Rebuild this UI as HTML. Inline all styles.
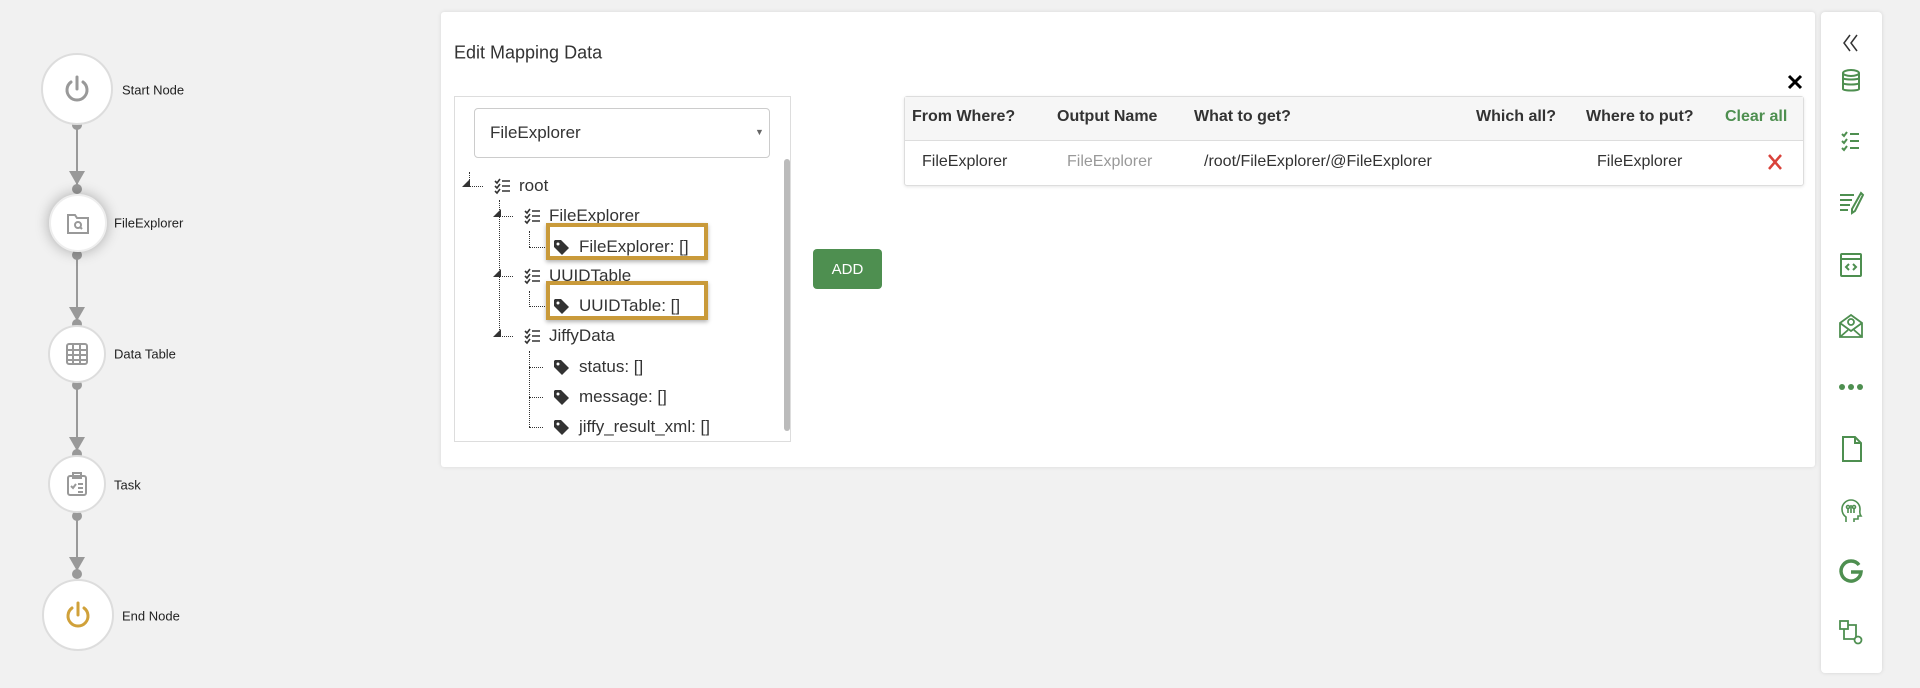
<!DOCTYPE html>
<html><head><meta charset="utf-8"><style>
*{box-sizing:border-box;margin:0;padding:0}
body{width:1920px;height:688px;overflow:hidden;background:#f1f1f1;font-family:"Liberation Sans",sans-serif;color:#222;position:relative}
.abs{position:absolute}
.node{position:absolute;border-radius:50%;background:#fff;border:2px solid #ddd;display:flex;align-items:center;justify-content:center}
.lbl{position:absolute;font-size:13px;color:#222;transform:translateY(-50%)}
.vline{position:absolute;width:2px;background:#999;left:76px}
.dot{position:absolute;width:10px;height:10px;border-radius:50%;background:#999;left:72px}
.arr{position:absolute;left:69px;width:0;height:0;border-left:8px solid transparent;border-right:8px solid transparent;border-top:14px solid #999}
.modal{left:441px;top:12px;width:1374px;height:455px;background:#fff;border-radius:3px;box-shadow:0 0 4px rgba(0,0,0,.1)}
.t{position:absolute;font-size:17px;color:#333;transform:translateY(-50%);white-space:nowrap}
.th{position:absolute;font-size:16px;font-weight:bold;color:#333;transform:translateY(-50%);white-space:nowrap}
.td{position:absolute;font-size:16px;color:#333;transform:translateY(-50%);white-space:nowrap}
.side{left:1821px;top:12px;width:61px;height:661px;background:#fff;border-radius:4px;box-shadow:0 0 4px rgba(0,0,0,.12)}
.ic{position:absolute;left:1837px}
</style></head><body>

<!-- flow -->
<div class="vline" style="top:118px;height:72px"></div>
<div class="dot" style="top:120px"></div><div class="arr" style="top:171px"></div><div class="dot" style="top:184px"></div>
<div class="vline" style="top:253px;height:72px"></div>
<div class="dot" style="top:250px"></div><div class="arr" style="top:307px"></div><div class="dot" style="top:319px"></div>
<div class="vline" style="top:382px;height:72px"></div>
<div class="dot" style="top:380px"></div><div class="arr" style="top:437px"></div><div class="dot" style="top:449px"></div>
<div class="vline" style="top:514px;height:64px"></div>
<div class="dot" style="top:511px"></div><div class="arr" style="top:557px"></div><div class="dot" style="top:569px"></div>

<div class="node" style="left:41px;top:53px;width:72px;height:72px">
<svg width="32" height="32" viewBox="0 0 32 32" fill="none" stroke="#999" stroke-width="3" stroke-linecap="round"><path d="M10 9a10 10 0 1 0 12 0"/><path d="M16 4v12"/></svg></div>
<div class="lbl" style="left:122px;top:90px">Start Node</div>
<div class="node" style="left:49px;top:194px;width:58px;height:58px;border-color:#eee;box-shadow:0 0 14px rgba(0,0,0,.3)">
<svg width="28" height="28" viewBox="0 0 28 28" fill="none" stroke="#999" stroke-width="2"><path d="M4 6h7l2 3h11v15H4z"/><circle cx="14" cy="16" r="3"/><path d="M16 18l2 2"/></svg></div>
<div class="lbl" style="left:114px;top:223px">FileExplorer</div>
<div class="node" style="left:48px;top:325px;width:58px;height:58px">
<svg width="26" height="26" viewBox="0 0 26 26" fill="none" stroke="#999" stroke-width="2"><rect x="3" y="3" width="20" height="20" rx="2"/><path d="M3 9h20M3 14h20M3 19h20M9 3v20M16 3v20"/></svg></div>
<div class="lbl" style="left:114px;top:354px">Data Table</div>
<div class="node" style="left:48px;top:455px;width:58px;height:58px">
<svg width="26" height="26" viewBox="0 0 26 26" fill="none" stroke="#999" stroke-width="2"><rect x="4" y="5" width="18" height="19" rx="2"/><rect x="9" y="2" width="8" height="5"/><path d="M7 15l2 2 3-4M14 13h5M14 17h5M14 21h5"/></svg></div>
<div class="lbl" style="left:114px;top:485px">Task</div>
<div class="node" style="left:42px;top:579px;width:72px;height:72px">
<svg width="32" height="32" viewBox="0 0 32 32" fill="none" stroke="#d0a13a" stroke-width="3" stroke-linecap="round"><path d="M10 9a10 10 0 1 0 12 0"/><path d="M16 4v12"/></svg></div>
<div class="lbl" style="left:122px;top:616px">End Node</div>

<!-- modal -->
<div class="abs modal"></div>
<div class="t" style="left:454px;top:53px;font-size:18px">Edit Mapping Data</div>
<svg class="abs" style="left:1787px;top:74px" width="16" height="16" viewBox="0 0 16 16" stroke="#000" stroke-width="3"><path d="M2 2l12 12M14 2L2 14"/></svg>

<div class="abs" style="left:454px;top:96px;width:337px;height:346px;border:1px solid #ddd"></div>
<div class="abs" style="left:474px;top:108px;width:296px;height:50px;border:1px solid #ccc;border-radius:4px"></div>
<div class="t" style="left:490px;top:133px">FileExplorer</div>
<div class="abs" style="left:755px;top:127px;font-size:9px;color:#666">▼</div>
<div class="abs" style="left:784px;top:159px;width:6px;height:272px;background:#bbb;border-radius:3px"></div>

<!-- tree lines -->
<div class="abs" style="left:469px;top:172px;height:14px;border-left:1px dotted #333"></div>
<div class="abs" style="left:469px;top:186px;width:14px;border-top:1px dotted #333"></div>
<div class="abs" style="left:499px;top:200px;height:136px;border-left:1px dotted #333"></div>
<div class="abs" style="left:499px;top:216px;width:14px;border-top:1px dotted #333"></div>
<div class="abs" style="left:499px;top:276px;width:14px;border-top:1px dotted #333"></div>
<div class="abs" style="left:499px;top:336px;width:14px;border-top:1px dotted #333"></div>
<div class="abs" style="left:529px;top:231px;height:16px;border-left:1px dotted #333"></div>
<div class="abs" style="left:529px;top:247px;width:18px;border-top:1px dotted #333"></div>
<div class="abs" style="left:529px;top:291px;height:16px;border-left:1px dotted #333"></div>
<div class="abs" style="left:529px;top:306px;width:18px;border-top:1px dotted #333"></div>
<div class="abs" style="left:529px;top:351px;height:76px;border-left:1px dotted #333"></div>
<div class="abs" style="left:529px;top:367px;width:14px;border-top:1px dotted #333"></div>
<div class="abs" style="left:529px;top:397px;width:14px;border-top:1px dotted #333"></div>
<div class="abs" style="left:529px;top:427px;width:14px;border-top:1px dotted #333"></div>

<svg width="0" height="0" style="position:absolute"><defs>
<g id="cl"><path d="M1 3l2 2 3-4M1 8l2 2 3-4M1 13l2 2 3-4M8 3h8M8 8h8M8 13h8" fill="none" stroke="#333" stroke-width="1.6"/></g>
<g id="tag"><path d="M1 2v6l8 8 7-7-8-8H2z" fill="#333"/><circle cx="5" cy="5" r="1.5" fill="#fff"/></g>
<g id="tri"><path d="M0 8L8 0v8z" fill="#333"/></g>
</defs></svg>

<svg class="abs" style="left:462px;top:179px" width="8" height="8"><use href="#tri"/></svg>
<svg class="abs" style="left:493px;top:209px" width="8" height="8"><use href="#tri"/></svg>
<svg class="abs" style="left:493px;top:269px" width="8" height="8"><use href="#tri"/></svg>
<svg class="abs" style="left:493px;top:329px" width="8" height="8"><use href="#tri"/></svg>

<svg class="abs" style="left:494px;top:178px" width="17" height="17"><use href="#cl"/></svg><div class="t" style="left:519px;top:186px">root</div>
<svg class="abs" style="left:524px;top:208px" width="17" height="17"><use href="#cl"/></svg><div class="t" style="left:549px;top:216px">FileExplorer</div>
<svg class="abs" style="left:524px;top:268px" width="17" height="17"><use href="#cl"/></svg><div class="t" style="left:549px;top:276px">UUIDTable</div>
<svg class="abs" style="left:524px;top:328px" width="17" height="17"><use href="#cl"/></svg><div class="t" style="left:549px;top:336px">JiffyData</div>

<div class="abs" style="left:546px;top:223px;width:162px;height:37px;border:4px solid #c99a3a;box-shadow:0 2px 4px rgba(0,0,0,.3)"></div>
<div class="abs" style="left:546px;top:281px;width:162px;height:39px;border:4px solid #c99a3a;box-shadow:0 2px 4px rgba(0,0,0,.3)"></div>

<svg class="abs" style="left:553px;top:239px" width="17" height="17"><use href="#tag"/></svg><div class="t" style="left:579px;top:247px">FileExplorer: []</div>
<svg class="abs" style="left:553px;top:298px" width="17" height="17"><use href="#tag"/></svg><div class="t" style="left:579px;top:306px">UUIDTable: []</div>
<svg class="abs" style="left:553px;top:359px" width="17" height="17"><use href="#tag"/></svg><div class="t" style="left:579px;top:367px">status: []</div>
<svg class="abs" style="left:553px;top:389px" width="17" height="17"><use href="#tag"/></svg><div class="t" style="left:579px;top:397px">message: []</div>
<svg class="abs" style="left:553px;top:419px" width="17" height="17"><use href="#tag"/></svg><div class="t" style="left:579px;top:427px">jiffy_result_xml: []</div>

<div class="abs" style="left:813px;top:249px;width:69px;height:40px;background:#4e8f50;border-radius:4px;color:#fff;font-size:15px;display:flex;align-items:center;justify-content:center">ADD</div>

<!-- table -->
<div class="abs" style="left:904px;top:96px;width:900px;height:90px;border:1px solid #ddd;border-radius:3px;box-shadow:0 1px 3px rgba(0,0,0,.1)"></div>
<div class="abs" style="left:905px;top:97px;width:898px;height:44px;background:#f6f6f6;border-bottom:1px solid #ddd"></div>
<div class="th" style="left:912px;top:117px">From Where?</div>
<div class="th" style="left:1057px;top:117px">Output Name</div>
<div class="th" style="left:1194px;top:117px">What to get?</div>
<div class="th" style="left:1476px;top:117px">Which all?</div>
<div class="th" style="left:1586px;top:117px">Where to put?</div>
<div class="th" style="left:1725px;top:117px;color:#4e8f50">Clear all</div>
<div class="td" style="left:922px;top:162px">FileExplorer</div>
<div class="td" style="left:1067px;top:162px;color:#999">FileExplorer</div>
<div class="td" style="left:1204px;top:162px">/root/FileExplorer/@FileExplorer</div>
<div class="td" style="left:1597px;top:162px">FileExplorer</div>
<svg class="abs" style="left:1767px;top:154px" width="16" height="16" stroke="#d9423a" stroke-width="2.5"><path d="M2 1l12 14M14 1L2 15"/></svg>

<!-- sidebar -->
<div class="abs side"></div>
<svg class="ic" style="top:32px" width="28" height="22" fill="none" stroke="#333" stroke-width="1.5"><path d="M13 3l-6 8 6 8M20 3l-6 8 6 8"/></svg>
<g></g>
<svg class="ic" style="top:68px" width="28" height="26" fill="none" stroke="#4e8f50" stroke-width="2"><ellipse cx="14" cy="5" rx="8" ry="3"/><path d="M6 5v16c0 2 16 2 16 0V5M6 10c0 2 16 2 16 0M6 15c0 2 16 2 16 0"/></svg>
<svg class="ic" style="top:129px" width="28" height="26" fill="none" stroke="#4e8f50" stroke-width="2"><path d="M5 5l2 2 3-4M5 12l2 2 3-4M5 19l2 2 3-4M13 5h9M13 12h9M13 19h9"/></svg>
<svg class="ic" style="top:190px" width="28" height="26" fill="none" stroke="#4e8f50" stroke-width="2"><path d="M3 5h14M3 10h12M3 15h10M3 20h8M24 3l2 2-8 16-3 2 0-4z"/></svg>
<svg class="ic" style="top:252px" width="28" height="26" fill="none" stroke="#4e8f50" stroke-width="2"><rect x="4" y="2" width="20" height="22" rx="1"/><path d="M4 7h20M12 12l-3 3 3 3M16 12l3 3-3 3"/></svg>
<svg class="ic" style="top:312px" width="28" height="28" fill="none" stroke="#4e8f50" stroke-width="1.8"><path d="M3 11l11-8 11 8v14H3zM3 11l11 8 11-8M3 25l8-7M25 25l-8-7"/><circle cx="14" cy="10" r="3"/></svg>
<svg class="ic" style="top:381px" width="28" height="12" fill="#4e8f50"><circle cx="5" cy="6" r="3"/><circle cx="14" cy="6" r="3"/><circle cx="23" cy="6" r="3"/></svg>
<svg class="ic" style="top:435px" width="28" height="28" fill="none" stroke="#4e8f50" stroke-width="2"><path d="M6 2h12l6 6v18H6zM18 2v6h6"/></svg>
<svg class="ic" style="top:496px" width="28" height="28" fill="none" stroke="#4e8f50" stroke-width="1.6"><path d="M9 26v-5c-3-2-4-5-4-8a9 9 0 0 1 18 0c0 3-1 4 1 7h-3v3h-4v3"/><circle cx="11" cy="11" r="1.5"/><circle cx="17" cy="11" r="1.5"/><path d="M11 13v4M17 13v4M14 9v8"/></svg>
<svg class="ic" style="top:557px" width="28" height="28" fill="none" stroke="#4e8f50" stroke-width="3.5"><path d="M22 8a10 10 0 1 0 2 7H14"/></svg>
<svg class="ic" style="top:618px" width="28" height="28" fill="none" stroke="#4e8f50" stroke-width="1.8"><rect x="3" y="3" width="8" height="8"/><path d="M11 7h8v12M7 11v10h10"/><circle cx="21" cy="22" r="3.5"/></svg>
</body></html>
